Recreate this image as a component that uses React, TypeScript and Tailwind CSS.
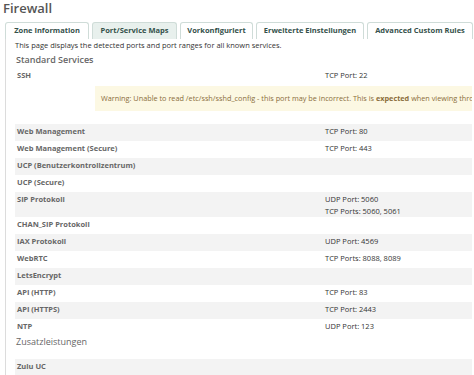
const tabs = [
  { label: "Zone Information", w: "w-[84px]", active: false },
  { label: "Port/Service Maps", w: "w-[85px]", active: true },
  { label: "Vorkonfiguriert", w: "w-[73px]", active: false },
  { label: "Erweiterte Einstellungen", w: "w-[108px]", active: false },
  { label: "Advanced Custom Rules", w: "w-[106px]", active: false },
];

type Service = { name: string; ports: string[] };

const standard: Service[] = [
  { name: "Web Management", ports: ["TCP Port: 80"] },
  { name: "Web Management (Secure)", ports: ["TCP Port: 443"] },
  { name: "UCP (Benutzerkontrollzentrum)", ports: [] },
  { name: "UCP (Secure)", ports: [] },
  { name: "SIP Protokoll", ports: ["UDP Port: 5060", "TCP Ports: 5060, 5061"] },
  { name: "CHAN_SIP Protokoll", ports: [] },
  { name: "IAX Protokoll", ports: ["UDP Port: 4569"] },
  { name: "WebRTC", ports: ["TCP Ports: 8088, 8089"] },
  { name: "LetsEncrypt", ports: [] },
  { name: "API (HTTP)", ports: ["TCP Port: 83"] },
  { name: "API (HTTPS)", ports: ["TCP Port: 2443"] },
  { name: "NTP", ports: ["UDP Port: 123"] },
];

const ServiceRow = ({ service, striped }: { service: Service; striped: boolean }) => (
  <div
    className={`grid grid-cols-[310px_1fr] min-h-[17px] leading-[12px] pt-px text-[7.5px] ${
      striped ? "bg-[#f3f3f3]" : "bg-white"
    }`}
  >
    <div className="pl-[2px] font-bold text-[#666]">{service.name}</div>
    <div className="text-[#333]">
      {service.ports.map((p) => (
        <div key={p}>{p}</div>
      ))}
    </div>
  </div>
);

export default function App() {
  return (
    <div className="w-[474px] h-[375px] overflow-hidden bg-white font-['Open_Sans',sans-serif]">
      <h1 className="pl-[3px] text-[13px] leading-[17px] font-semibold text-[#555]">Firewall</h1>

      <div className="flex gap-[3px] pl-[5px] mt-[5px]">
        {tabs.map((t) => (
          <div
            key={t.label}
            className={`${t.w} shrink-0 h-[17px] flex items-center justify-center rounded-t-[3px] border border-b-0 border-[#cfdcd8] text-[7.5px] font-bold text-[#34504a] whitespace-nowrap ${
              t.active ? "bg-[#e8f0ed]" : "bg-white"
            }`}
          >
            {t.label}
          </div>
        ))}
      </div>

      <div className="ml-[5px] border-l border-[#dcdcdc] pl-[9px] pr-[2px] h-[400px]">
        <p className="text-[7.5px] leading-[12px] text-[#333]">
          This page displays the detected ports and port ranges for all known services.
        </p>
        <h2 className="pl-[1px] text-[9px] leading-[17px] font-semibold text-[#666]">Standard Services</h2>

        <div className="grid grid-cols-[310px_1fr] min-h-[17px] leading-[12px] text-[7.5px] pt-px">
          <div className="pl-[2px] font-bold text-[#666]">SSH</div>
          <div className="text-[#333]">TCP Port: 22</div>
        </div>
        <div className="pl-[80px] pt-px pb-[13px]">
          <div className="h-[25px] flex items-center pl-[6px] bg-[#fcf8e3] text-[7.3px] text-[#8a6d3b] whitespace-nowrap overflow-hidden">
            <span>
              Warning: Unable to read /etc/ssh/sshd_config - this port may be incorrect. This is{" "}
              <b>expected</b> when viewing through a proxy.
            </span>
          </div>
        </div>

        {standard.map((s, i) => (
          <ServiceRow key={s.name} service={s} striped={i % 2 === 0} />
        ))}

        <h2 className="pl-[1px] text-[9px] leading-[12px] pb-[11px] font-medium text-[#666]">Zusatzleistungen</h2>
        <ServiceRow service={{ name: "Zulu UC", ports: [] }} striped />
      </div>
    </div>
  );
}
